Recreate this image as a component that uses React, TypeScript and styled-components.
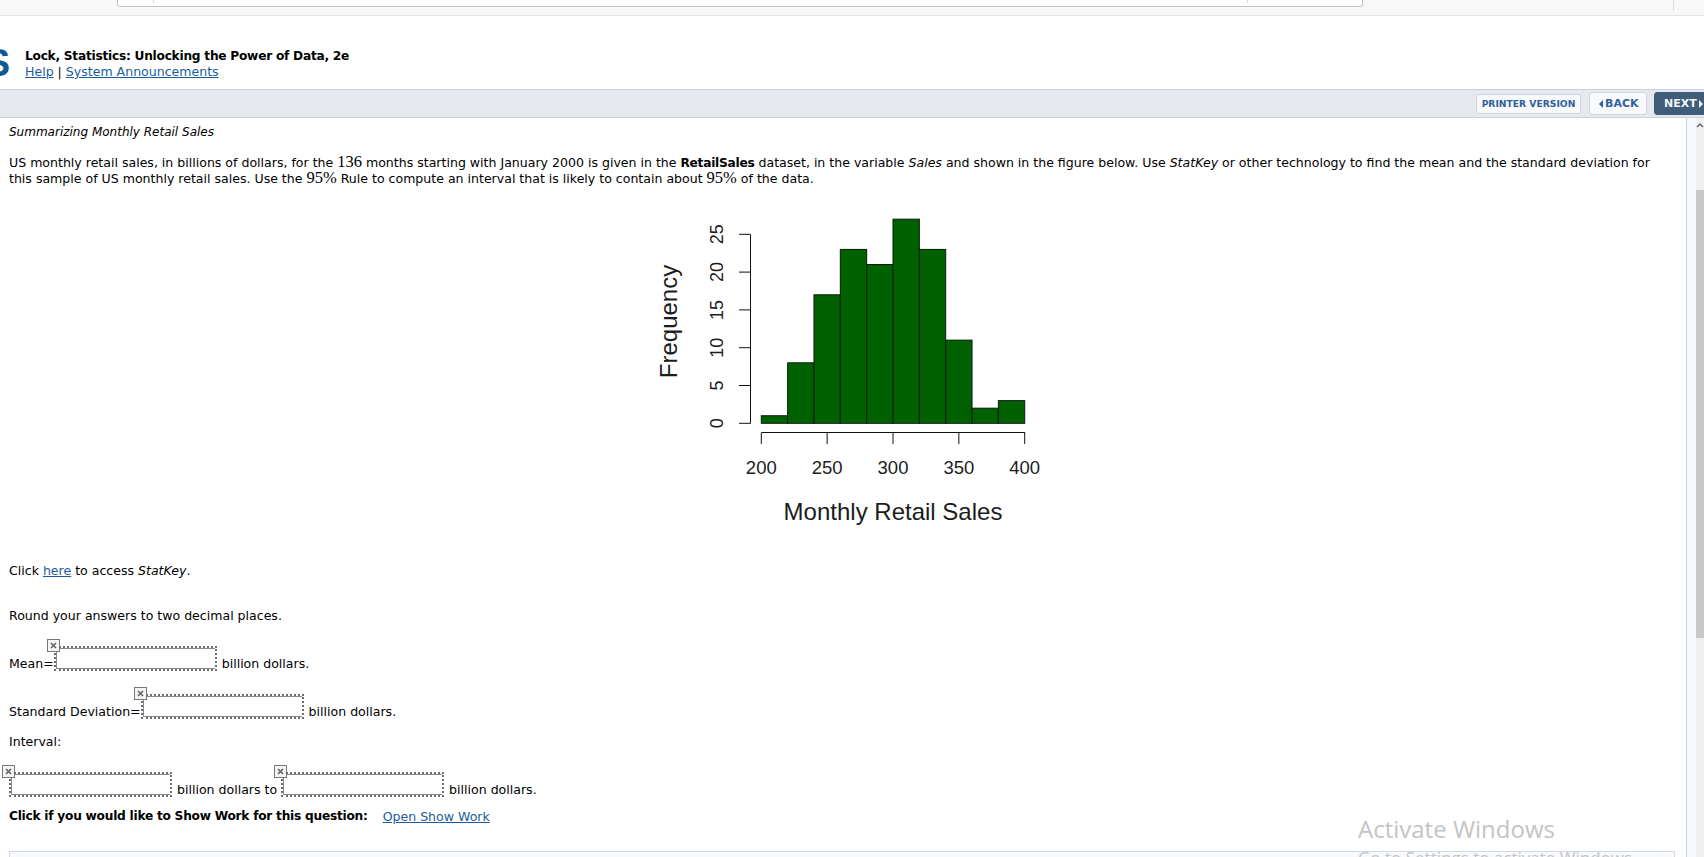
import styled, { createGlobalStyle } from "styled-components"

const Global = createGlobalStyle`
    html, body { margin: 0; padding: 0; background: #fff; overflow: hidden; }
    body { font-family: "DejaVu Sans", Verdana, sans-serif; font-size: 12.56px; color: #000; }
`

const Page = styled.div`
    width: 1704px;
    height: 857px;
    display: flex;
    flex-direction: column;
    overflow: hidden;
`

/* browser chrome left at the top of the capture */
const Strip = styled.div`
    height: 15px;
    flex: none;
    background: #f8f8f8;
    border-bottom: 1px solid #e2e2e2;
    padding-left: 117px;
    padding-right: 30px;
    display: flex;
    justify-content: space-between;
    align-items: flex-start;
`
const AddressBox = styled.div`
    width: 1246px;
    height: 7px;
    background: #fff;
    border: 1px solid #c4c4c4;
    border-top: 0;
    border-radius: 0 0 3px 3px;
    display: flex;
    justify-content: space-between;
    padding: 0 114px 0 35px;
    box-sizing: border-box;
`
const BoxDivider = styled.div`
    width: 1px;
    height: 3px;
    background: #d8d8d8;
`
const StripDivider = styled.div`
    width: 1px;
    height: 11px;
    background: #dcdcdc;
`

const Header = styled.div`
    height: 73px;
    flex: none;
    display: flex;
    gap: 15px;
    padding-top: 33px;
    box-sizing: border-box;
`
const Logo = styled.div`
    width: 10px;
    height: 28px;
    overflow: hidden;
    display: flex;
    justify-content: flex-end;
    flex: none;
`
const LogoGlyph = styled.span`
    font: bold 38px/28px "Liberation Sans", sans-serif;
    color: #0f5a8e;
`
const Title = styled.div`
    font-weight: bold;
    font-size: 12.2px;
    letter-spacing: -0.25px;
    line-height: 15px;
`
const Crumbs = styled.div`
    line-height: 15px;
`
const Link = styled.a`
    color: #1c5c9c;
    text-decoration: underline;
`

const Toolbar = styled.div`
    height: 29px;
    flex: none;
    box-sizing: border-box;
    background: #e6eaef;
    border-top: 1px solid #c9d0d8;
    border-bottom: 1px solid #c9d0d8;
    display: flex;
    justify-content: flex-end;
    align-items: center;
    overflow: hidden;
`
const PrintButton = styled.div`
    width: 105px;
    height: 20px;
    flex: none;
    box-sizing: border-box;
    display: flex;
    align-items: center;
    justify-content: center;
    margin-right: 8px;
    border-radius: 3px;
    font-weight: bold;
    font-size: 9.2px;
    color: #2f5f9e;
    background: #f7f9fb;
    border: 1px solid #cdd5de;
`
const NavButton = styled.div<{ $primary?: boolean }>`
    width: ${(p) => (p.$primary ? 62 : 58)}px;
    height: 23px;
    flex: none;
    box-sizing: border-box;
    display: flex;
    align-items: center;
    gap: 2px;
    padding-left: 9px;
    margin-right: ${(p) => (p.$primary ? -12 : 7)}px;
    border-radius: 3px;
    font-weight: bold;
    font-size: 11px;
    color: ${(p) => (p.$primary ? "#f2f5f8" : "#2f5f9e")};
    background: ${(p) => (p.$primary ? "#3f5c78" : "#f7f9fb")};
    border: 1px solid ${(p) => (p.$primary ? "#3f5c78" : "#cdd5de")};
`
const Arrow = styled.i<{ $right?: boolean }>`
    width: 0;
    height: 0;
    border-top: 4px solid transparent;
    border-bottom: 4px solid transparent;
    ${(p) => (p.$right ? "border-left: 4px solid #f2f5f8;" : "border-right: 4px solid #2f5f9e;")}
`

const Body = styled.div`
    flex: 1;
    min-height: 0;
    display: flex;
`
const Main = styled.div`
    flex: 1;
    min-width: 0;
    padding: 7px 11px 0 9px;
    line-height: 15px;
`
const Rail = styled.div`
    width: 9px;
    flex: none;
    background: #f5f8fd;
    border-left: 1px solid #c9d0dc;
`
const Track = styled.div`
    width: 8px;
    flex: none;
    background: #f0f0f0;
    padding-top: 72px;
    position: relative;
`
const Thumb = styled.div`
    height: 448px;
    background: #c8c8c8;
`
const TrackArrow = styled.svg`
    position: absolute;
    top: 4px;
    left: 0;
`

const Caption = styled.div`
    font-style: italic;
    font-size: 12px;
    margin-bottom: 15px;
`
const Prompt = styled.div`
    line-height: 16px;
`
const Math = styled.span`
    font-family: "Liberation Serif", serif;
    font-size: 16.5px;
    line-height: 0;
`
const FigureRow = styled.div`
    display: flex;
    justify-content: center;
    padding-left: 16px;
    margin-top: 13px;
`
const Chart = styled.svg`
    display: block;
`
const AxisText = styled.text`
    font-family: "Liberation Sans", sans-serif;
    fill: #1c1c1c;
`

const Line = styled.div<{ $top: number }>`
    margin-top: ${(p) => p.$top}px;
`
const FieldRow = styled.div<{ $top: number }>`
    margin-top: ${(p) => p.$top}px;
    height: 25px;
    display: flex;
    align-items: flex-end;
    line-height: 15px;
    white-space: pre;
`
const Field = styled.span`
    position: relative;
    display: block;
    width: 163px;
    height: 25px;
    box-sizing: border-box;
    flex: none;
    border: 2px dotted #6e6e6e;
    margin: 0 5px 0 0;
    background: #fff;
`
const Inner = styled.span`
    display: block;
    height: 100%;
    border: 1px solid #8a8a8a;
    border-width: 1px 0 1px 1px;
    box-sizing: border-box;
`
const Close = styled.span`
    position: absolute;
    top: -9px;
    left: -9px;
    width: 13px;
    height: 13px;
    box-sizing: border-box;
    border: 1px solid #777;
    background: #f4f4f4;
    display: flex;
    align-items: center;
    justify-content: center;
`
const ShowWork = styled.div`
    margin-top: 12px;
    display: flex;
    gap: 15px;
`
const Strong = styled.b`
    font-weight: bold;
    font-size: 12.2px;
    letter-spacing: -0.25px;
`
const Panel = styled.div`
    margin-top: 27px;
    height: 40px;
    background: #f7f9fc;
    border: 1px solid #d0d8e4;
`

const Watermark = styled.div`
    position: absolute;
    left: 1358px;
    top: 813px;
    font-family: "Open Sans", sans-serif;
    font-size: 24px;
    line-height: 32px;
    color: #c4c4c4;
    pointer-events: none;
`
const WatermarkSub = styled.div`
    font-size: 17px;
    line-height: 22px;
    margin-top: 2px;
`

const counts = [1, 8, 17, 23, 21, 27, 23, 11, 2, 3]
const xLeft = 121.3
const binW = 26.34
const yBase = 223.3
const unit = 7.56

function Histogram() {
    return (
        <Chart width="420" height="340" viewBox="0 0 420 340">
            {counts.map((c, i) => (
                <rect key={i} x={xLeft + i * binW} y={yBase - c * unit} width={binW} height={c * unit} fill="#006100" stroke="#0b1a0b" strokeWidth="1" />
            ))}
            <path d="M110.5 223.5V34.5" stroke="#111" fill="none" />
            {[0, 5, 10, 15, 20, 25].map((v) => (
                <g key={v}>
                    <path d={`M99 ${yBase - v * unit}H110.5`} stroke="#111" />
                    <AxisText fontSize="18" textAnchor="middle" transform={`translate(82.5 ${yBase - v * unit}) rotate(-90)`}>{v}</AxisText>
                </g>
            ))}
            <AxisText fontSize="24" textAnchor="middle" transform={`translate(37 121.5) rotate(-90)`}>Frequency</AxisText>
            <path d="M121.5 232.5H385" stroke="#111" fill="none" />
            {[200, 250, 300, 350, 400].map((v, i) => (
                <g key={v}>
                    <path d={`M${xLeft + i * 65.85} 232.5V244`} stroke="#111" />
                    <AxisText fontSize="18.5" textAnchor="middle" x={xLeft + i * 65.85} y="274">{v}</AxisText>
                </g>
            ))}
            <AxisText fontSize="24" textAnchor="middle" x="253" y="320">Monthly Retail Sales</AxisText>
        </Chart>
    )
}

function Blank() {
    return (
        <Field>
            <Inner />
            <Close>
                <svg width="9" height="9" viewBox="0 0 9 9">
                    <path d="M2 2L7 7M7 2L2 7" stroke="#666" strokeWidth="1.7" />
                </svg>
            </Close>
        </Field>
    )
}

export default function App() {
    return (
        <Page>
            <Global />
            <Strip>
                <AddressBox>
                    <BoxDivider />
                    <BoxDivider />
                </AddressBox>
                <StripDivider />
            </Strip>
            <Header>
                <Logo>
                    <LogoGlyph>S</LogoGlyph>
                </Logo>
                <div>
                    <Title>Lock, Statistics: Unlocking the Power of Data, 2e</Title>
                    <Crumbs>
                        <Link>Help</Link> | <Link>System Announcements</Link>
                    </Crumbs>
                </div>
            </Header>
            <Toolbar>
                <PrintButton>PRINTER VERSION</PrintButton>
                <NavButton>
                    <Arrow />
                    BACK
                </NavButton>
                <NavButton $primary>
                    NEXT
                    <Arrow $right />
                </NavButton>
            </Toolbar>
            <Body>
                <Main>
                    <Caption>Summarizing Monthly Retail Sales</Caption>
                    <Prompt>
                        US monthly retail sales, in billions of dollars, for the <Math>136</Math> months starting with January 2000 is given in the <Strong>RetailSales</Strong> dataset, in the variable <i>Sales</i> and shown in the figure below. Use <i>StatKey</i> or other technology to find the mean and the standard deviation for this sample of US monthly retail sales. Use the <Math>95%</Math> Rule to compute an interval that is likely to contain about <Math>95%</Math> of the data.
                    </Prompt>
                    <FigureRow>
                        <Histogram />
                    </FigureRow>
                    <Line $top={23}>
                        Click <Link>here</Link> to access <i>StatKey</i>.
                    </Line>
                    <Line $top={30}>Round your answers to two decimal places.</Line>
                    <FieldRow $top={23}>
                        Mean=
                        <Blank />
                        billion dollars.
                    </FieldRow>
                    <FieldRow $top={23}>
                        Standard Deviation=
                        <Blank />
                        billion dollars.
                    </FieldRow>
                    <Line $top={15}>Interval:</Line>
                    <FieldRow $top={23}>
                        <Blank />
                        billion dollars to <Blank />
                        billion dollars.
                    </FieldRow>
                    <ShowWork>
                        <Strong>Click if you would like to Show Work for this question:</Strong>
                        <Link>Open Show Work</Link>
                    </ShowWork>
                    <Panel />
                </Main>
                <Rail />
                <Track>
                    <TrackArrow width="8" height="6" viewBox="0 0 8 6">
                        <path d="M1 5L4 2L7 5" stroke="#666" strokeWidth="1.5" fill="none" />
                    </TrackArrow>
                    <Thumb />
                </Track>
            </Body>
            <Watermark>
                Activate Windows
                <WatermarkSub>Go to Settings to activate Windows.</WatermarkSub>
            </Watermark>
        </Page>
    )
}
